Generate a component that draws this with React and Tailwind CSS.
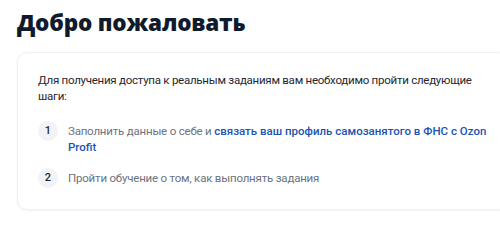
export default function App() {
  const steps = [
    {
      n: 1,
      body: (
        <>
          Заполнить данные о себе и{' '}
          <a href="#" className="text-[#2153b3] font-medium tracking-normal">
            связать ваш профиль самозанятого в ФНС с Ozon Profit
          </a>
        </>
      ),
    },
    { n: 2, body: 'Пройти обучение о том, как выполнять задания' },
  ]

  return (
    <div className="min-h-[237px] w-[500px] overflow-hidden bg-white pl-[17px] pt-[11px] font-['Roboto',sans-serif]">
      <h1 className="font-['Open_Sans',sans-serif] text-[22.5px] leading-[24px] font-extrabold tracking-[-0.2px] text-[#0f1b2d]">
        Добро пожаловать
      </h1>

      <div className="mt-[17px] w-[492px] rounded-[10px] border border-[#eef0f3] bg-white pl-[20px] pr-[16px] pt-[19px] pb-[21px] shadow-[0_1px_3px_rgba(0,20,60,0.05)]">
        <p className="text-[11.5px] leading-[16px] tracking-[-0.25px] text-[#1f2733]">
          Для получения доступа к реальным заданиям вам необходимо пройти следующие шаги:
        </p>

        <ol className="mt-[19px] flex flex-col gap-[15px]">
          {steps.map((s) => (
            <li key={s.n} className="flex items-start gap-[10px] text-[11.5px] leading-[16px] tracking-[-0.2px] text-[#6b7380]">
              <span className="mt-[-2px] flex h-[20px] w-[20px] shrink-0 items-center justify-center rounded-full bg-[#f1f3f7] text-[11px] font-medium tracking-normal text-[#1f2733]">
                {s.n}
              </span>
              <span className="pr-[4px]">{s.body}</span>
            </li>
          ))}
        </ol>
      </div>
    </div>
  )
}
